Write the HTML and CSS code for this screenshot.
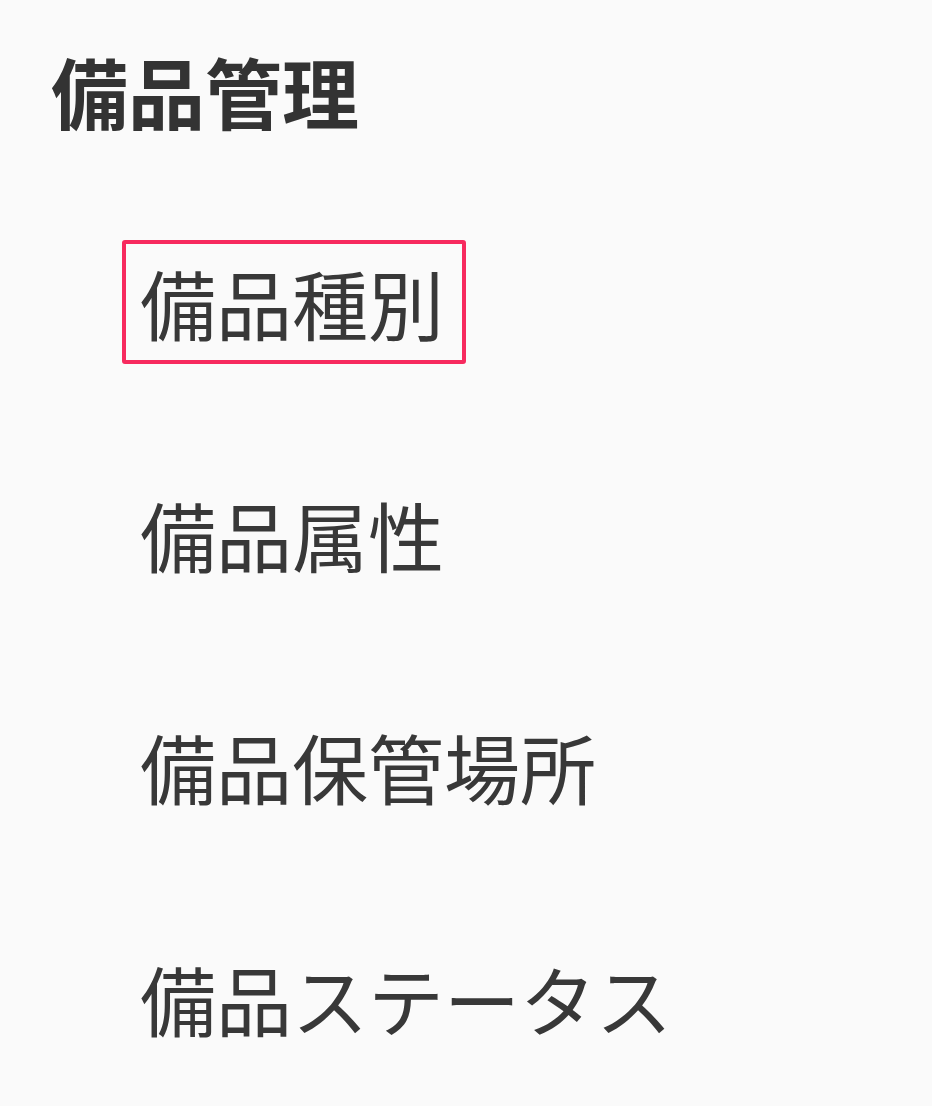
FILE: index.html
```html
<!DOCTYPE html>
<html lang="ja">
<head>
<meta charset="utf-8">
<title>備品管理</title>
<link rel="stylesheet" href="styles.css">
</head>
<body>
<main class="page">
  <h1 class="title">備品管理</h1>
  <ul class="menu">
    <li class="item item--selected">備品種別</li>
    <li class="item">備品属性</li>
    <li class="item">備品保管場所</li>
    <li class="item">備品ステータス</li>
  </ul>
</main>
</body>
</html>
```
FILE: styles.css
```css
html, body {
  margin: 0;
  padding: 0;
  background: #fafafa;
}
body {
  font-family: "Noto Sans CJK JP", "Noto Sans", sans-serif;
  color: #383838;
}
.page {
  padding: 52px 0 0 51px;
}
.title {
  margin: 0;
  font-size: 77px;
  line-height: 1;
  font-weight: 700;
  color: #333;
}
.menu {
  list-style: none;
  margin: 111px 0 0 0;
  padding: 0 0 0 71px;
  display: flex;
  flex-direction: column;
  align-items: flex-start;
  gap: 108px;
}
.item {
  font-size: 76px;
  line-height: 1;
  padding: 20px 18px 20px 14px;
  border: 4px solid transparent;
  border-radius: 3px;
}
.item--selected {
  border-color: #f72a5e;
}
```
